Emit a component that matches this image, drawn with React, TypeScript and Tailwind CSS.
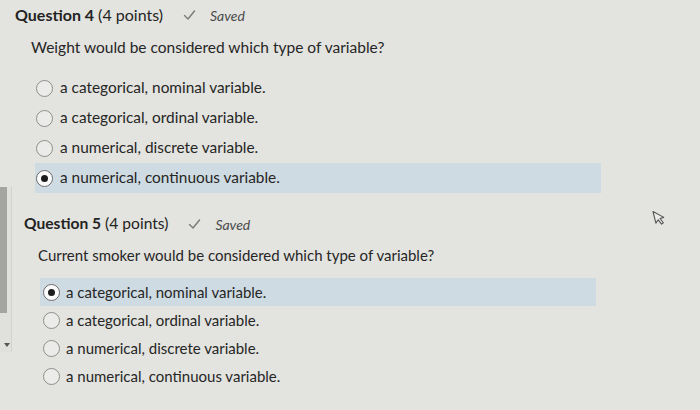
import React from "react";

type Q = {
  num: number;
  prompt: string;
  options: string[];
  selected: number;
};

const questions: Q[] = [
  {
    num: 4,
    prompt: "Weight would be considered which type of variable?",
    options: [
      "a categorical, nominal variable.",
      "a categorical, ordinal variable.",
      "a numerical, discrete variable.",
      "a numerical, continuous variable.",
    ],
    selected: 3,
  },
  {
    num: 5,
    prompt: "Current smoker would be considered which type of variable?",
    options: [
      "a categorical, nominal variable.",
      "a categorical, ordinal variable.",
      "a numerical, discrete variable.",
      "a numerical, continuous variable.",
    ],
    selected: 0,
  },
];

function Radio({ checked }: { checked: boolean }) {
  return (
    <span
      className={`flex h-[17px] w-[17px] shrink-0 items-center justify-center rounded-full border ${
        checked ? "border-[#6b6b6b] bg-[#fbfbfb]" : "border-[#8e8e8c] bg-[#ebebe9]"
      }`}
    >
      {checked && <span className="h-[7px] w-[7px] rounded-full bg-[#1c1c1c]" />}
    </span>
  );
}

function Header({ num, size }: { num: number; size: string }) {
  return (
    <div className={`flex h-[20px] items-center text-[#232323] ${size}`}>
      <span className="font-bold">Question {num}</span>
      <span className="ml-[4px]">(4 points)</span>
      <svg className="ml-[20px] h-[12px] w-[13px]" viewBox="0 0 13 12" fill="none">
        <path d="M1.5 6.5 L5 10 L11.5 2" stroke="#7a7a7a" strokeWidth="1.4" strokeLinecap="round" strokeLinejoin="round" />
      </svg>
      <span className="ml-[14px] text-[14px] italic text-[#4a4a4a]">Saved</span>
    </div>
  );
}

function Cursor() {
  return (
    <svg className="absolute left-[651px] top-[210px] h-[18px] w-[14px]" viewBox="0 0 14 18" fill="none">
      <path
        d="M2 1.5 L2 13.5 L5 10.8 L7.3 15.8 L9.3 14.9 L7.1 10 L11 9.8 Z"
        fill="#ececea"
        stroke="#555"
        strokeWidth="1.1"
        strokeLinejoin="round"
        transform="rotate(-14 2 1.5)"
      />
    </svg>
  );
}

export default function App() {
  const [q4, q5] = questions;
  return (
    <div
      className="relative h-[410px] w-[700px] overflow-hidden bg-[#e3e3df] text-[#262626]"
      style={{ fontFamily: "Lato, 'Open Sans', sans-serif" }}
    >
      {/* question 4 */}
      <div className="pl-[15px] pt-[5px]">
        <Header num={q4.num} size="text-[16px]" />
        <div className="ml-[16px] mt-[12px] h-[20px] text-[15.5px] leading-[20px]">{q4.prompt}</div>
        <div className="ml-[20px] mt-[16px] w-[566px]">
          {q4.options.map((o, i) => (
            <div
              key={o}
              className={`flex h-[30px] items-center gap-[7px] pl-[1px] text-[15.4px] ${
                i === q4.selected ? "bg-[#cfdbe2]" : ""
              }`}
            >
              <Radio checked={i === q4.selected} />
              <span>{o}</span>
            </div>
          ))}
        </div>
      </div>

      {/* question 5 */}
      <div className="pl-[24px] pt-[21px]">
        <Header num={q5.num} size="text-[15.6px]" />
        <div className="ml-[14px] mt-[11px] h-[20px] text-[15px] leading-[20px]">{q5.prompt}</div>
        <div className="ml-[16px] mt-[13px] w-[556px]">
          {q5.options.map((o, i) => (
            <div
              key={o}
              className={`flex h-[28px] items-center gap-[6px] pl-[3px] text-[15px] ${
                i === q5.selected ? "bg-[#cfdbe2]" : ""
              }`}
            >
              <Radio checked={i === q5.selected} />
              <span>{o}</span>
            </div>
          ))}
        </div>
      </div>

      {/* scroll handle on left edge */}
      <div className="absolute left-0 top-[187px] h-[165px] w-[12px] border-r border-[#d2d2cf] bg-[#e0e0dc]">
        <div className="h-[126px] w-[7px] bg-[#a4a4a0]" />
        <div className="ml-[4px] mt-[30px] h-0 w-0 border-x-[3px] border-t-[4px] border-x-transparent border-t-[#555]" />
      </div>

      <Cursor />
    </div>
  );
}
